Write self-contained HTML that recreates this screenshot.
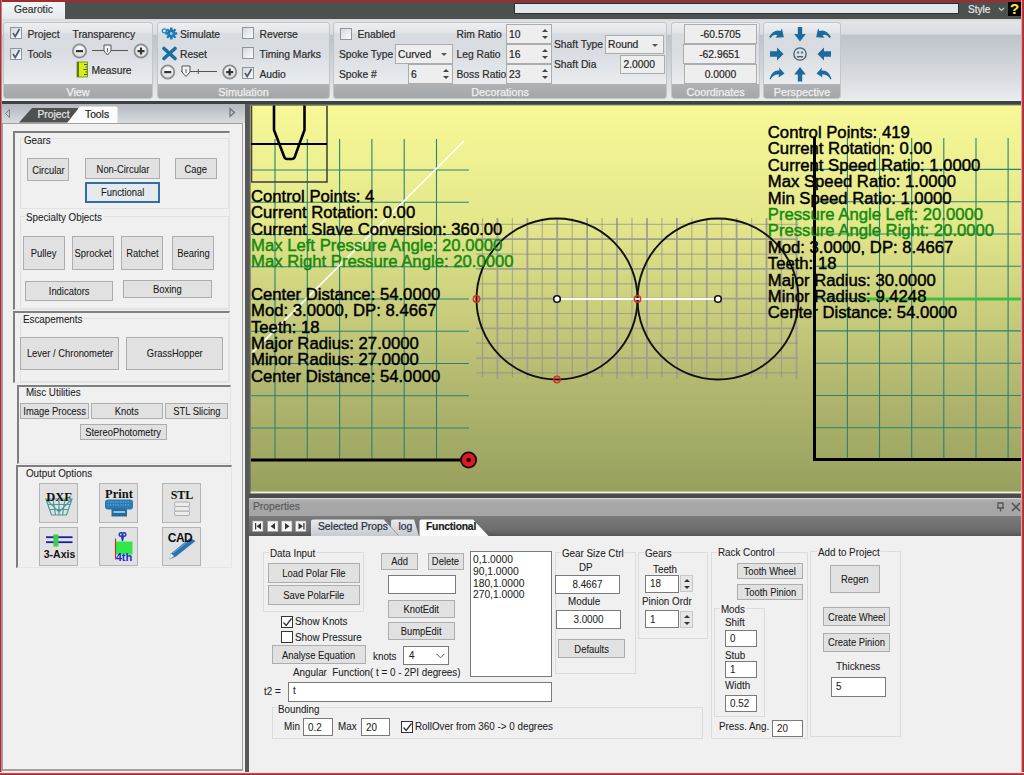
<!DOCTYPE html>
<html><head><meta charset="utf-8">
<style>
*{margin:0;padding:0;box-sizing:border-box;}
html,body{width:1024px;height:775px;overflow:hidden;}
body{position:relative;background:#f0f0f0;font-family:"Liberation Sans",sans-serif;color:#222;}
.a{position:absolute;}
.t{position:absolute;white-space:nowrap;line-height:1;}
/* frame */
#frameT{left:0;top:0;width:1024px;height:1.5px;background:#a02c30;}
#frameL{left:0;top:0;width:2px;height:775px;background:linear-gradient(90deg,#9c2e34 0,#a83a40 55%,#f0d4d4 100%);}
#frameR{left:1021px;top:0;width:3px;height:775px;background:linear-gradient(90deg,#f4dada 0,#c04048 45%,#9c2a30 100%);}
#frameB{left:0;top:772px;width:1024px;height:3px;background:linear-gradient(#f6e4e4 0,#f0d0d0 30%,#b03038 55%,#9a2830 100%);}
#titlebar{left:2px;top:2px;width:1020px;height:17px;background:#4e5050;}
#tabG{left:2px;top:1px;width:63px;height:21px;background:linear-gradient(#f4f6f8,#e4e7ea);border-radius:2px 2px 0 0;}
#ribbon{left:2px;top:19px;width:1020px;height:82px;background:linear-gradient(#d4d8dc 0,#e2e5e8 3px,#dadde1 15px,#bfc4ca 16.5px,#c6cbd1 30px,#d6dade 55px,#e6eaed 78px,#eef0f2 82px);}
.grp{position:absolute;top:22px;height:77px;border:1px solid #c3c6c9;border-radius:3px;background:linear-gradient(#eceef1 0,#e3e6e9 9px,#d8dce0 11px,#d9dde1 30px,#e4e7ea 50px,#eceef0 63px);overflow:hidden;}
.grpl{position:absolute;left:0;right:0;bottom:0;height:14px;background:linear-gradient(#b0b3b6,#a4a7aa);color:#f0f0f0;font-size:10.8px;text-align:center;line-height:16px;-webkit-text-stroke:0.25px #f0f0f0;}
#ribbonLine{left:2px;top:101px;width:1020px;height:3px;background:#3f4242;}
/* left panel */
#lpTabs{left:2px;top:104px;width:243px;height:19px;background:linear-gradient(#b2b7be,#d9dcdf);}
#lpBody{left:2px;top:123px;width:241px;height:648px;background:#f0f0f0;border:1px solid #a0a0a0;border-bottom:2px solid #a0a0a0;}
#splitter{left:245px;top:104px;width:4px;height:668px;background:#565858;}
#canvasFrame{left:250px;top:104px;width:772px;height:390px;background:#3a3c3c;}
#props{left:249px;top:494px;width:773px;height:278px;background:#f0f0f0;}
#propsLine{left:249px;top:494px;width:773px;height:4px;background:#4a4c4c;}
#propsTitle{left:249px;top:498px;width:773px;height:18px;background:linear-gradient(#b4b4b4,#a7a7a7 30%,#a5a5a5);}
#propsTabs{left:249px;top:516px;width:773px;height:20px;background:linear-gradient(#7a7a7a,#6c6c6c 70%,#555 100%);}
.cb{position:absolute;width:12px;height:12px;border:1px solid #8f969d;background:linear-gradient(135deg,#d3d8de,#fbfcfd);}
.cb svg{position:absolute;left:0;top:0;}
.rt{position:absolute;white-space:nowrap;font-size:10.3px;line-height:12px;color:#2c2c2c;}
.ri{position:absolute;background:#eeeeee;border:1px solid #aaacae;font-size:10.3px;color:#262626;}
.ri span{position:absolute;left:2px;top:3.8px;line-height:12px;white-space:nowrap;}
.ri.c span{left:0;right:0;text-align:center;}
.dd{position:absolute;right:5px;top:8px;width:0;height:0;border-left:3px solid transparent;border-right:3px solid transparent;border-top:3px solid #555;}
.sp{position:absolute;right:3px;top:3px;width:7px;height:12px;}
.sp:before{content:"";position:absolute;left:0.5px;top:1px;border-left:3px solid transparent;border-right:3px solid transparent;border-bottom:3px solid #444;}
.sp:after{content:"";position:absolute;left:0.5px;top:8px;border-left:3px solid transparent;border-right:3px solid transparent;border-top:3px solid #444;}
.gb{position:absolute;border-top:2px solid #7f7f7f;border-left:2px solid #7f7f7f;border-right:1px solid #e4e4e4;border-bottom:1px solid #e4e4e4;}
.gf{position:absolute;border:1px solid #e2e2e2;}
.gl{position:absolute;white-space:nowrap;font-size:9.7px;line-height:11px;color:#1e1e1e;background:#f0f0f0;padding:0 1px;}
.bt{position:absolute;background:#e1e1e1;border:1px solid #adadad;font-size:9.6px;color:#1a1a1a;display:flex;align-items:center;justify-content:center;white-space:nowrap;}
.bt.sel{border:2px solid #2f6fa3;background:#e5eaee;}
.ib{position:absolute;width:39px;height:39.5px;background:#e1e1e1;border:1px solid #b4b4b4;}
.ib svg{position:absolute;left:-1px;top:-1px;}
.pg{position:absolute;border:1px solid #dcdcdc;}
.pl{position:absolute;white-space:nowrap;font-size:9.7px;line-height:11px;color:#1e1e1e;background:#f0f0f0;padding:0 1px;}
.pt{position:absolute;white-space:nowrap;font-size:9.7px;line-height:11px;color:#1e1e1e;}
.pi{position:absolute;background:#fff;border:1px solid #7a7a7a;}
.pi span{position:absolute;left:3px;top:3px;font-size:9.7px;line-height:11px;color:#1e1e1e;white-space:nowrap;}
.pi.c span{left:0;right:0;text-align:center;}
.pc{position:absolute;width:12px;height:12px;background:#fff;border:1px solid #333;}
.pc svg{position:absolute;left:0;top:0;}
.psp{position:absolute;width:13px;height:17px;background:#e6e6e6;border:1px solid #c8c8c8;}
.psp:before{content:"";position:absolute;left:3.5px;top:3px;border-left:3px solid transparent;border-right:3px solid transparent;border-bottom:3.5px solid #333;}
.psp:after{content:"";position:absolute;left:3.5px;top:10px;border-left:3px solid transparent;border-right:3px solid transparent;border-top:3.5px solid #333;}
.rt,.ri span,.t{-webkit-text-stroke:0.2px currentColor;}
.bt,.pt,.pl,.gl,.pi span{-webkit-text-stroke:0.08px currentColor;}
.s{display:inline-block;transform:scaleX(0.88);}
.bt,.pt,.pl,.gl,.pi span{font-size:10.7px !important;}
.pt,.pl,.gl,.pi span{transform:scaleX(0.92);transform-origin:0 50%;}
.pi.c span{transform-origin:50% 50%;}
</style></head>
<body>
<div class="a" id="titlebar"></div>
<div class="a" id="tabG"></div>
<div class="t" style="left:14px;top:5px;font-size:10.3px;color:#333;">Gearotic</div>
<div class="a" style="left:514px;top:3px;width:445px;height:11px;background:#e3e6ec;border:1px solid #2e3030;"></div>
<div class="t" style="left:968px;top:5px;font-size:10px;color:#e8e8e8;">Style</div>
<svg class="a" style="left:998px;top:6.5px;" width="7" height="5"><path d="M1,1 L3.5,3.5 L6,1" fill="none" stroke="#cfcfcf" stroke-width="1.1"/></svg>
<div class="a" style="left:1008px;top:1px;width:14px;height:15px;background:#000;"></div>
<div class="t" style="left:1010px;top:1px;font-size:15px;font-weight:bold;color:#f4e838;">?</div>

<div class="a" id="ribbon"></div>

<!-- View group -->
<div class="grp" style="left:3px;width:150px;"><div class="grpl">View</div></div>
<!-- Simulation group -->
<div class="grp" style="left:157px;width:173px;"><div class="grpl">Simulation</div></div>
<!-- Decorations -->
<div class="grp" style="left:333px;width:334px;"><div class="grpl">Decorations</div></div>
<!-- Coordinates -->
<div class="grp" style="left:671px;width:89px;"><div class="grpl">Coordinates</div></div>
<!-- Perspective group -->
<div class="grp" style="left:763px;width:78px;"><div class="grpl">Perspective</div></div>
<!--RIBBON-->
<svg width="0" height="0" style="position:absolute"><defs>
<radialGradient id="circg" cx="0.5" cy="0.35" r="0.7"><stop offset="0" stop-color="#ffffff"/><stop offset="1" stop-color="#d0d3d6"/></radialGradient>
<linearGradient id="cbg" x1="0" y1="0" x2="1" y2="1"><stop offset="0" stop-color="#d6dbe1"/><stop offset="1" stop-color="#ffffff"/></linearGradient>
</defs></svg>
<!-- View -->
<div class="cb" style="left:10px;top:27px;"><svg width="10" height="10"><path d="M2,5 L4.2,8.5 L8.5,1" fill="none" stroke="#4d5d6c" stroke-width="1.7"/></svg></div>
<div class="rt" style="left:27.5px;top:28.5px;">Project</div>
<div class="cb" style="left:10px;top:47.5px;"><svg width="10" height="10"><path d="M2,5 L4.2,8.5 L8.5,1" fill="none" stroke="#4d5d6c" stroke-width="1.7"/></svg></div>
<div class="rt" style="left:27.5px;top:48.5px;">Tools</div>
<div class="rt" style="left:72.5px;top:28.5px;">Transparency</div>
<svg class="a" style="left:71px;top:43px;" width="80" height="17">
<circle cx="8.5" cy="8" r="6.6" fill="url(#circg)" stroke="#8c8f92" stroke-width="1.8"/>
<rect x="5" y="7" width="7" height="2.2" fill="#333"/>
<line x1="21" y1="7.5" x2="57" y2="7.5" stroke="#555" stroke-width="1"/>
<path d="M33,2 L40,2 L40,8 L36.5,12 L33,8 Z" fill="#f2f2f2" stroke="#555" stroke-width="1"/>
<line x1="36.5" y1="5" x2="36.5" y2="9" stroke="#666" stroke-width="1"/>
<circle cx="70" cy="8" r="6.6" fill="url(#circg)" stroke="#8c8f92" stroke-width="1.8"/>
<rect x="66.5" y="7" width="7" height="2.2" fill="#333"/><rect x="68.9" y="4.5" width="2.2" height="7" fill="#333"/>
</svg>
<svg class="a" style="left:76px;top:61px;" width="13" height="17">
<rect x="1" y="1" width="10.5" height="15" fill="#d4ef1a" stroke="#6a8a10" stroke-width="0.8"/>
<rect x="1" y="1" width="2" height="15" fill="#5e7a10"/>
<path d="M8,3.5 H11.5 M9.5,6 H11.5 M7.5,8.5 H11.5 M9.5,11 H11.5 M8,13.5 H11.5" stroke="#4a5a10" stroke-width="1"/>
</svg>
<div class="rt" style="left:91.5px;top:64.5px;">Measure</div>
<!-- Simulation -->
<svg class="a" style="left:160px;top:27px;" width="18" height="13">
<circle cx="4.3" cy="3.8" r="2" fill="none" stroke="#2a84c0" stroke-width="1.3"/>
<g transform="translate(11.3,6.5)" fill="#1f78b8">
<circle r="4.2"/>
<rect x="-1.2" y="-6" width="2.4" height="12"/><rect x="-6" y="-1.2" width="12" height="2.4"/>
<rect x="-1.2" y="-6" width="2.4" height="12" transform="rotate(45)"/><rect x="-6" y="-1.2" width="12" height="2.4" transform="rotate(45)"/>
<circle r="1.5" fill="#8fd0f0"/>
</g></svg>
<div class="rt" style="left:180px;top:28.5px;">Simulate</div>
<svg class="a" style="left:161px;top:46px;" width="17" height="15">
<path d="M3,2.5 L14,12.5 M14,2.5 L3,12.5" stroke="#1d6ca6" stroke-width="3.6" stroke-linecap="round"/>
</svg>
<div class="rt" style="left:180px;top:48.5px;">Reset</div>
<svg class="a" style="left:159px;top:64px;" width="80" height="17">
<circle cx="8.7" cy="8" r="6.6" fill="url(#circg)" stroke="#8c8f92" stroke-width="1.8"/>
<rect x="5.2" y="7" width="7" height="2.2" fill="#333"/>
<line x1="22" y1="7.5" x2="58" y2="7.5" stroke="#555" stroke-width="1"/>
<line x1="39.3" y1="5" x2="39.3" y2="10" stroke="#555" stroke-width="1"/>
<path d="M23,2 L31,2 L31,8 L27,12.5 L23,8 Z" fill="#f2f2f2" stroke="#555" stroke-width="1"/>
<line x1="27" y1="5" x2="27" y2="9" stroke="#666" stroke-width="1"/>
<circle cx="70.7" cy="8" r="6.6" fill="url(#circg)" stroke="#8c8f92" stroke-width="1.8"/>
<rect x="67.2" y="7" width="7" height="2.2" fill="#333"/><rect x="69.6" y="4.5" width="2.2" height="7" fill="#333"/>
</svg>
<div class="cb" style="left:242px;top:27px;"></div>
<div class="rt" style="left:259.5px;top:28.5px;">Reverse</div>
<div class="cb" style="left:242px;top:47px;"></div>
<div class="rt" style="left:259.5px;top:48.5px;">Timing Marks</div>
<div class="cb" style="left:242px;top:67px;"><svg width="10" height="10"><path d="M2,5 L4.2,8.5 L8.5,1" fill="none" stroke="#4d5d6c" stroke-width="1.7"/></svg></div>
<div class="rt" style="left:259.5px;top:68.5px;">Audio</div>
<!-- Decorations -->
<div class="cb" style="left:340px;top:27.5px;"></div>
<div class="rt" style="left:357.5px;top:28.5px;">Enabled</div>
<div class="rt" style="left:339px;top:49px;">Spoke Type</div>
<div class="ri" style="left:395px;top:44px;width:58px;height:20px;"><span>Curved</span><i class="dd"></i></div>
<div class="rt" style="left:339px;top:69px;">Spoke #</div>
<div class="ri" style="left:408px;top:64px;width:45px;height:20px;"><span>6</span><i class="sp"></i></div>
<div class="rt" style="left:456.5px;top:28.5px;">Rim Ratio</div>
<div class="rt" style="left:456.5px;top:49px;">Leg Ratio</div>
<div class="rt" style="left:456.5px;top:69px;">Boss Ratio</div>
<div class="ri" style="left:506px;top:24px;width:46px;height:20px;"><span>10</span><i class="sp"></i></div>
<div class="ri" style="left:506px;top:44px;width:46px;height:20px;"><span>16</span><i class="sp"></i></div>
<div class="ri" style="left:506px;top:64px;width:46px;height:20px;"><span>23</span><i class="sp"></i></div>
<div class="rt" style="left:554px;top:39px;">Shaft Type</div>
<div class="ri" style="left:605px;top:34.5px;width:59px;height:19px;"><span>Round</span><i class="dd"></i></div>
<div class="rt" style="left:554px;top:59px;">Shaft Dia</div>
<div class="ri" style="left:619.5px;top:54.5px;width:45px;height:19px;"><span style="left:3px">2.0000</span></div>
<!-- Coordinates -->
<div class="ri c" style="left:684px;top:24px;width:73px;height:19.5px;"><span>-60.5705</span></div>
<div class="ri c" style="left:683px;top:44px;width:73px;height:19.5px;"><span>-62.9651</span></div>
<div class="ri c" style="left:684px;top:64px;width:73px;height:19.5px;"><span>0.0000</span></div>
<!-- Perspective -->
<svg class="a" style="left:765px;top:24px;" width="74" height="60" fill="#1b6b9f" stroke="none">
<path d="M4,13 Q9,4.5 15.5,7 L17,4.5 L18.8,13.2 L10.5,13.8 L12.5,11.2 Q8.5,9.5 5.5,14 Z"/>
<path d="M32.8,3 H37.2 V10 H40.8 L35,17.5 L29.2,10 H32.8 Z"/>
<path d="M66,13 Q61,4.5 54.5,7 L53,4.5 L51.2,13.2 L59.5,13.8 L57.5,11.2 Q61.5,9.5 64.5,14 Z"/>
<path d="M5,27.3 H12 V23.5 L18.5,30 L12,36.5 V32.7 H5 Z"/>
<circle cx="35" cy="30" r="6.2" fill="none" stroke="#3c5f78" stroke-width="1.3"/>
<rect x="32.2" y="27.6" width="1.8" height="1.8" fill="#3c5f78"/><rect x="36.1" y="27.6" width="1.8" height="1.8" fill="#3c5f78"/><rect x="32" y="32" width="6" height="1.4" fill="#3c5f78"/>
<path d="M66,27.3 H59 V23.5 L52.5,30 L59,36.5 V32.7 H66 Z"/>
<path d="M4.5,55 Q7,45.5 14.5,46.5 L14,43.5 L19.5,49.5 L13.5,53.5 L14,50.5 Q8.5,50 5.5,55.5 Z"/>
<path d="M32.8,57.5 H37.2 V50.5 H40.8 L35,43 L29.2,50.5 H32.8 Z"/>
<path d="M66.5,55 Q64,45.5 56.5,46.5 L57,43.5 L51.5,49.5 L57.5,53.5 L57,50.5 Q62.5,50 65.5,55.5 Z"/>
</svg>
<!--/RIBBON-->


<div class="a" id="ribbonLine"></div>

<div class="a" id="lpTabs"></div>
<div class="a" id="lpBody"></div>
<!--LEFT-->
<svg class="a" style="left:2px;top:104px;" width="243" height="20">
<path d="M3.5,9.5 L7.5,5.5 L7.5,13.5 Z" fill="none" stroke="#7b7f84" stroke-width="1"/>
<path d="M232,4.5 L228,0.5 L228,0.5" fill="none"/>
<path d="M232.5,8.5 L228,4.5 L228,12.5 Z" fill="none" stroke="#6b6f74" stroke-width="1.2"/>
<path d="M17,18.5 L30,4 L76,4 L76,18.5 Z" fill="#4f5151"/>
<path d="M65,19 L78,2.5 L114,2.5 Q115.5,2.5 115.5,4 L115.5,19 Z" fill="#fbfbfb"/>
</svg>
<div class="t" style="left:37.5px;top:109.5px;font-size:10.3px;color:#e6e6e6;">Project</div>
<div class="t" style="left:85px;top:109.5px;font-size:10.3px;color:#222;">Tools</div>
<!-- group frames -->
<div class="gb" style="left:13px;top:131px;width:217px;height:179px;"></div>
<div class="gf" style="left:20px;top:138px;width:209px;height:71px;"></div>
<div class="gf" style="left:20px;top:216px;width:209px;height:93px;"></div>
<div class="gb" style="left:13px;top:311px;width:217px;height:72px;"></div>
<div class="gf" style="left:20px;top:318px;width:209px;height:64px;"></div>
<div class="gb" style="left:17px;top:385px;width:214px;height:79px;"></div>
<div class="gb" style="left:16px;top:465px;width:216px;height:103px;"></div>
<div class="gl" style="left:22.5px;top:134.5px;">Gears</div>
<div class="gl" style="left:24.5px;top:212px;">Specialty Objects</div>
<div class="gl" style="left:22px;top:313.5px;">Escapements</div>
<div class="gl" style="left:25px;top:387px;">Misc Utilities</div>
<div class="gl" style="left:25px;top:467.5px;">Output Options</div>
<!-- buttons -->
<div class="bt" style="left:27px;top:158px;width:42px;height:23px;"><span class="s">Circular</span></div>
<div class="bt" style="left:85px;top:158px;width:75px;height:21px;"><span class="s">Non-Circular</span></div>
<div class="bt" style="left:175px;top:158px;width:42px;height:21px;"><span class="s">Cage</span></div>
<div class="bt sel" style="left:85px;top:181.5px;width:75px;height:21px;"><span class="s">Functional</span></div>
<div class="bt" style="left:23px;top:236px;width:42px;height:34px;"><span class="s">Pulley</span></div>
<div class="bt" style="left:72px;top:236px;width:42px;height:34px;"><span class="s">Sprocket</span></div>
<div class="bt" style="left:121px;top:236px;width:42px;height:34px;"><span class="s">Ratchet</span></div>
<div class="bt" style="left:172px;top:236px;width:42px;height:34px;"><span class="s">Bearing</span></div>
<div class="bt" style="left:25px;top:281px;width:88px;height:20px;"><span class="s">Indicators</span></div>
<div class="bt" style="left:123px;top:279.5px;width:89px;height:18px;"><span class="s">Boxing</span></div>
<div class="bt" style="left:20px;top:336.5px;width:99px;height:33px;"><span class="s">Lever / Chronometer</span></div>
<div class="bt" style="left:126px;top:336.5px;width:97px;height:33px;"><span class="s">GrassHopper</span></div>
<div class="bt" style="left:20px;top:402.5px;width:68.5px;height:16px;"><span class="s">Image Process</span></div>
<div class="bt" style="left:91px;top:402.5px;width:72px;height:16px;"><span class="s">Knots</span></div>
<div class="bt" style="left:165px;top:402.5px;width:63px;height:16px;"><span class="s">STL Slicing</span></div>
<div class="bt" style="left:79.5px;top:423.5px;width:87px;height:16px;"><span class="s">StereoPhotometry</span></div>
<!-- output icons -->
<div class="ib" style="left:39px;top:483px;">
<svg width="40" height="40">
<path d="M7,16 L33,16 L27.5,32 L12.5,32 Z M9.5,21.5 L30.5,21.5 M11,26.5 L29,26.5 M20,16 L20,32 M14,16 L16.5,32 M26,16 L23.5,32 M7,16 L20,29 L33,16" fill="none" stroke="#4a9a98" stroke-width="1.2"/>
<text x="20" y="17.5" text-anchor="middle" font-family="Liberation Serif" font-weight="bold" font-size="12.5" fill="#111">DXF</text>
</svg></div>
<div class="ib" style="left:99px;top:483px;">
<svg width="40" height="40">
<text x="20" y="15" text-anchor="middle" font-family="Liberation Serif" font-weight="bold" font-size="12.5" fill="#111">Print</text>
<rect x="6" y="16.5" width="28" height="10" rx="3" fill="#2a7ab4"/>
<path d="M8.5,19 H31.5 M8.5,22 H31.5" stroke="#6ab0dc" stroke-width="1" stroke-dasharray="1.5,1"/>
<rect x="12.5" y="25.5" width="15.5" height="8" fill="#2a6a9c"/>
<rect x="14.5" y="28" width="11.5" height="2" fill="#8cc4e8"/>
</svg></div>
<div class="ib" style="left:162px;top:483px;">
<svg width="40" height="40">
<text x="20" y="15.5" text-anchor="middle" font-family="Liberation Serif" font-weight="bold" font-size="12" fill="#111">STL</text>
<g fill="#ececec" stroke="#a8a8a8" stroke-width="0.9">
<rect x="12.5" y="28" width="15" height="4.5" rx="1.5"/>
<rect x="12.5" y="23.5" width="15" height="4.5" rx="1.5"/>
<rect x="12.5" y="19" width="15" height="4.5" rx="1.5"/>
</g>
</svg></div>
<div class="ib" style="left:39px;top:526.5px;">
<svg width="40" height="40">
<rect x="7" y="9.3" width="26.5" height="1.8" fill="#1c1ca8"/><rect x="7" y="14.3" width="26.5" height="1.8" fill="#1c1ca8"/>
<rect x="14.4" y="7.5" width="5" height="12" fill="#3ad04a"/>
<text x="20.5" y="31" text-anchor="middle" font-family="Liberation Sans" font-weight="bold" font-size="10.5" fill="#111">3-Axis</text>
</svg></div>
<div class="ib" style="left:99px;top:526.5px;">
<svg width="40" height="40">
<circle cx="22" cy="7.5" r="1.8" fill="none" stroke="#1a3ac0" stroke-width="1.4"/><circle cx="25" cy="7.5" r="1.8" fill="none" stroke="#1a3ac0" stroke-width="1.4"/>
<path d="M22.5,9 L23.5,14 L24.5,9" fill="none" stroke="#1a3ac0" stroke-width="1.3"/>
<rect x="16" y="14.5" width="17.5" height="13" fill="#30e84a"/>
<line x1="16.5" y1="11.5" x2="16.5" y2="32.5" stroke="#c03020" stroke-width="1.1"/>
<text x="25" y="34" text-anchor="middle" font-family="Liberation Sans" font-weight="bold" font-size="11" fill="#1a2ac8">4th</text>
</svg></div>
<div class="ib" style="left:162px;top:526.5px;">
<svg width="40" height="40">
<path d="M7,32.5 L9,26.5 L28,11 L33.5,14 L14,29.5 Z" fill="#2a74b0"/>
<path d="M7,32.5 L9,26.5 L12,29 Z" fill="#e8f0f0"/>
<path d="M11,26 L27,13.5" stroke="#6aaad8" stroke-width="1"/>
<text x="18" y="15" text-anchor="middle" font-family="Liberation Sans" font-weight="bold" font-size="12" fill="#111" letter-spacing="-0.5">CAD</text>
</svg></div>
<!--/LEFT-->

<div class="a" id="splitter"></div>
<!--CANVAS--><svg class="a" style="left:0;top:0;" width="1024" height="775" viewBox="0 0 1024 775">
<defs><linearGradient id="cg" x1="0" y1="0" x2="0" y2="1">
<stop offset="0" stop-color="#f7f997"/><stop offset="0.3" stop-color="#e4e78a"/><stop offset="0.72" stop-color="#b3b870"/><stop offset="1" stop-color="#97a05d"/></linearGradient>
<clipPath id="cc"><rect x="250.5" y="105.5" width="771.5" height="386.5"/></clipPath></defs>
<rect x="249" y="104" width="773" height="390" fill="#3c3e3e"/><rect x="249" y="104" width="1.5" height="390" fill="#606262"/>
<rect x="250.5" y="104.5" width="771" height="1.5" fill="#8a8a78"/>
<rect x="250.5" y="105.5" width="771.5" height="386.5" fill="url(#cg)"/>
<rect x="250.5" y="491.5" width="771.5" height="2" fill="#eeeedc"/>
<g clip-path="url(#cc)">
<line x1="482.5" y1="218.0" x2="482.5" y2="377.0" stroke="rgba(128,128,140,0.5)" stroke-width="1.2" />
<line x1="497.4" y1="218.0" x2="497.4" y2="379.0" stroke="#a09f94" stroke-width="1.8" />
<line x1="512.4" y1="218.0" x2="512.4" y2="377.0" stroke="rgba(128,128,140,0.5)" stroke-width="1.2" />
<line x1="527.4" y1="218.0" x2="527.4" y2="379.0" stroke="#a09f94" stroke-width="1.8" />
<line x1="542.3" y1="218.0" x2="542.3" y2="377.0" stroke="rgba(128,128,140,0.5)" stroke-width="1.2" />
<line x1="557.2" y1="218.0" x2="557.2" y2="379.0" stroke="#a09f94" stroke-width="1.8" />
<line x1="572.2" y1="218.0" x2="572.2" y2="377.0" stroke="rgba(128,128,140,0.5)" stroke-width="1.2" />
<line x1="587.1" y1="218.0" x2="587.1" y2="379.0" stroke="#a09f94" stroke-width="1.8" />
<line x1="602.1" y1="218.0" x2="602.1" y2="377.0" stroke="rgba(128,128,140,0.5)" stroke-width="1.2" />
<line x1="617.0" y1="218.0" x2="617.0" y2="379.0" stroke="#a09f94" stroke-width="1.8" />
<line x1="632.0" y1="218.0" x2="632.0" y2="377.0" stroke="rgba(128,128,140,0.5)" stroke-width="1.2" />
<line x1="647.0" y1="218.0" x2="647.0" y2="379.0" stroke="#a09f94" stroke-width="1.8" />
<line x1="661.9" y1="218.0" x2="661.9" y2="377.0" stroke="rgba(128,128,140,0.5)" stroke-width="1.2" />
<line x1="676.9" y1="218.0" x2="676.9" y2="379.0" stroke="#a09f94" stroke-width="1.8" />
<line x1="691.8" y1="218.0" x2="691.8" y2="377.0" stroke="rgba(128,128,140,0.5)" stroke-width="1.2" />
<line x1="706.8" y1="218.0" x2="706.8" y2="379.0" stroke="#a09f94" stroke-width="1.8" />
<line x1="721.7" y1="218.0" x2="721.7" y2="377.0" stroke="rgba(128,128,140,0.5)" stroke-width="1.2" />
<line x1="736.6" y1="218.0" x2="736.6" y2="379.0" stroke="#a09f94" stroke-width="1.8" />
<line x1="751.6" y1="218.0" x2="751.6" y2="377.0" stroke="rgba(128,128,140,0.5)" stroke-width="1.2" />
<line x1="766.5" y1="218.0" x2="766.5" y2="379.0" stroke="#a09f94" stroke-width="1.8" />
<line x1="781.5" y1="218.0" x2="781.5" y2="377.0" stroke="rgba(128,128,140,0.5)" stroke-width="1.2" />
<line x1="796.5" y1="218.0" x2="796.5" y2="379.0" stroke="#a09f94" stroke-width="1.8" />
<line x1="476.0" y1="224.4" x2="798.0" y2="224.4" stroke="rgba(128,128,140,0.5)" stroke-width="1.2" />
<line x1="476.0" y1="239.2" x2="798.0" y2="239.2" stroke="#a09f94" stroke-width="1.8" />
<line x1="476.0" y1="254.1" x2="798.0" y2="254.1" stroke="rgba(128,128,140,0.5)" stroke-width="1.2" />
<line x1="476.0" y1="268.9" x2="798.0" y2="268.9" stroke="#a09f94" stroke-width="1.8" />
<line x1="476.0" y1="283.8" x2="798.0" y2="283.8" stroke="rgba(128,128,140,0.5)" stroke-width="1.2" />
<line x1="476.0" y1="298.6" x2="798.0" y2="298.6" stroke="#a09f94" stroke-width="1.8" />
<line x1="476.0" y1="313.5" x2="798.0" y2="313.5" stroke="rgba(128,128,140,0.5)" stroke-width="1.2" />
<line x1="476.0" y1="328.4" x2="798.0" y2="328.4" stroke="#a09f94" stroke-width="1.8" />
<line x1="476.0" y1="343.2" x2="798.0" y2="343.2" stroke="rgba(128,128,140,0.5)" stroke-width="1.2" />
<line x1="476.0" y1="358.1" x2="798.0" y2="358.1" stroke="#a09f94" stroke-width="1.8" />
<line x1="476.0" y1="372.9" x2="798.0" y2="372.9" stroke="rgba(128,128,140,0.5)" stroke-width="1.2" />
<line x1="275.0" y1="139.0" x2="275.0" y2="459.0" stroke="#2a8274" stroke-width="1.1" />
<line x1="307.3" y1="139.0" x2="307.3" y2="459.0" stroke="#2a8274" stroke-width="1.1" />
<line x1="339.6" y1="139.0" x2="339.6" y2="459.0" stroke="#2a8274" stroke-width="1.1" />
<line x1="371.9" y1="139.0" x2="371.9" y2="459.0" stroke="#2a8274" stroke-width="1.1" />
<line x1="404.2" y1="139.0" x2="404.2" y2="459.0" stroke="#2a8274" stroke-width="1.1" />
<line x1="436.5" y1="139.0" x2="436.5" y2="459.0" stroke="#2a8274" stroke-width="1.1" />
<line x1="251.0" y1="170.0" x2="469.0" y2="170.0" stroke="#2a8274" stroke-width="1.1" />
<line x1="251.0" y1="202.2" x2="469.0" y2="202.2" stroke="#2a8274" stroke-width="1.1" />
<line x1="251.0" y1="234.5" x2="469.0" y2="234.5" stroke="#2a8274" stroke-width="1.1" />
<line x1="251.0" y1="266.8" x2="469.0" y2="266.8" stroke="#2a8274" stroke-width="1.1" />
<line x1="251.0" y1="299.0" x2="469.0" y2="299.0" stroke="#2a8274" stroke-width="1.1" />
<line x1="251.0" y1="331.2" x2="469.0" y2="331.2" stroke="#2a8274" stroke-width="1.1" />
<line x1="251.0" y1="363.5" x2="469.0" y2="363.5" stroke="#2a8274" stroke-width="1.1" />
<line x1="251.0" y1="395.8" x2="469.0" y2="395.8" stroke="#2a8274" stroke-width="1.1" />
<line x1="251.0" y1="428.0" x2="469.0" y2="428.0" stroke="#2a8274" stroke-width="1.1" />
<line x1="847.4" y1="138.0" x2="847.4" y2="459.0" stroke="#2a8274" stroke-width="1.1" />
<line x1="879.5" y1="138.0" x2="879.5" y2="459.0" stroke="#2a8274" stroke-width="1.1" />
<line x1="911.7" y1="138.0" x2="911.7" y2="459.0" stroke="#2a8274" stroke-width="1.1" />
<line x1="943.8" y1="138.0" x2="943.8" y2="459.0" stroke="#2a8274" stroke-width="1.1" />
<line x1="976.0" y1="138.0" x2="976.0" y2="459.0" stroke="#2a8274" stroke-width="1.1" />
<line x1="1008.1" y1="138.0" x2="1008.1" y2="459.0" stroke="#2a8274" stroke-width="1.1" />
<line x1="815.0" y1="169.4" x2="1022.0" y2="169.4" stroke="#2a8274" stroke-width="1.1" />
<line x1="815.0" y1="201.7" x2="1022.0" y2="201.7" stroke="#2a8274" stroke-width="1.1" />
<line x1="815.0" y1="234.0" x2="1022.0" y2="234.0" stroke="#2a8274" stroke-width="1.1" />
<line x1="815.0" y1="266.3" x2="1022.0" y2="266.3" stroke="#2a8274" stroke-width="1.1" />
<line x1="815.0" y1="298.6" x2="1022.0" y2="298.6" stroke="#2a8274" stroke-width="1.1" />
<line x1="815.0" y1="330.9" x2="1022.0" y2="330.9" stroke="#2a8274" stroke-width="1.1" />
<line x1="815.0" y1="363.2" x2="1022.0" y2="363.2" stroke="#2a8274" stroke-width="1.1" />
<line x1="815.0" y1="395.5" x2="1022.0" y2="395.5" stroke="#2a8274" stroke-width="1.1" />
<line x1="815.0" y1="427.8" x2="1022.0" y2="427.8" stroke="#2a8274" stroke-width="1.1" />
<rect x="251.5" y="105" width="75.5" height="77" fill="none" stroke="#474740" stroke-width="1.6"/>
<line x1="251" y1="144" x2="327" y2="144" stroke="#000" stroke-width="2.2"/>
<path d="M274,104 L274,130 L284.5,157.5 Q285.5,159 287,159 L292,159 Q293.5,159 294.5,157.5 L304.5,130 L304.5,104" fill="none" stroke="#000" stroke-width="2.6" stroke-linejoin="round"/>
<line x1="464" y1="141" x2="252" y2="353" stroke="#fff" stroke-width="1.6"/>
<circle cx="557" cy="299" r="80.5" fill="none" stroke="#111" stroke-width="1.9"/>
<circle cx="718" cy="299" r="80.5" fill="none" stroke="#111" stroke-width="1.9"/>
<line x1="557" y1="299" x2="718" y2="299" stroke="#fff" stroke-width="2"/>
<circle cx="557" cy="299" r="3.3" fill="#fff" stroke="#111" stroke-width="1.6"/>
<circle cx="718" cy="299" r="3.3" fill="#fff" stroke="#111" stroke-width="1.6"/>
<circle cx="476.5" cy="299" r="3.2" fill="none" stroke="#e02a20" stroke-width="1.4"/>
<circle cx="637.5" cy="299" r="3.2" fill="none" stroke="#e02a20" stroke-width="1.4"/>
<circle cx="557" cy="379.5" r="3.2" fill="none" stroke="#e02a20" stroke-width="1.4"/>
<line x1="814.5" y1="137" x2="814.5" y2="461" stroke="#000" stroke-width="3"/>
<line x1="813" y1="459.5" x2="1022" y2="459.5" stroke="#000" stroke-width="3"/>
<line x1="860" y1="299" x2="1022" y2="299" stroke="#3fbf3f" stroke-width="3.2"/>
<line x1="251" y1="460" x2="462" y2="460" stroke="#000" stroke-width="3"/>
<circle cx="468.6" cy="460" r="7.6" fill="#e01a22" stroke="#111" stroke-width="1.8"/>
<circle cx="468.6" cy="460" r="2.3" fill="#1a0a0a"/>
<g font-family="Liberation Sans" font-size="16.7" stroke-width="0.45">
<text x="251" y="201.8" fill="#000" stroke="#000">Control Points: 4</text>
<text x="251" y="218.2" fill="#000" stroke="#000">Current Rotation: 0.00</text>
<text x="251" y="234.5" fill="#000" stroke="#000">Current Slave Conversion: 360.00</text>
<text x="251" y="250.9" fill="#138a13" stroke="#138a13">Max Left Pressure Angle: 20.0000</text>
<text x="251" y="267.2" fill="#138a13" stroke="#138a13">Max Right Pressure Angle: 20.0000</text>
<text x="251" y="299.9" fill="#000" stroke="#000">Center Distance: 54.0000</text>
<text x="251" y="316.2" fill="#000" stroke="#000">Mod: 3.0000, DP: 8.4667</text>
<text x="251" y="332.6" fill="#000" stroke="#000">Teeth: 18</text>
<text x="251" y="349.0" fill="#000" stroke="#000">Major Radius: 27.0000</text>
<text x="251" y="365.3" fill="#000" stroke="#000">Minor Radius: 27.0000</text>
<text x="251" y="381.7" fill="#000" stroke="#000">Center Distance: 54.0000</text>
<text x="767.8" y="138.0" fill="#000" stroke="#000">Control Points: 419</text>
<text x="767.8" y="154.4" fill="#000" stroke="#000">Current Rotation: 0.00</text>
<text x="767.8" y="170.8" fill="#000" stroke="#000">Current Speed Ratio: 1.0000</text>
<text x="767.8" y="187.2" fill="#000" stroke="#000">Max Speed Ratio: 1.0000</text>
<text x="767.8" y="203.6" fill="#000" stroke="#000">Min Speed Ratio: 1.0000</text>
<text x="767.8" y="220.0" fill="#138a13" stroke="#138a13">Pressure Angle Left: 20.0000</text>
<text x="767.8" y="236.4" fill="#138a13" stroke="#138a13">Pressure Angle Right: 20.0000</text>
<text x="767.8" y="252.8" fill="#000" stroke="#000">Mod: 3.0000, DP: 8.4667</text>
<text x="767.8" y="269.2" fill="#000" stroke="#000">Teeth: 18</text>
<text x="767.8" y="285.6" fill="#000" stroke="#000">Major Radius: 30.0000</text>
<text x="767.8" y="302.0" fill="#000" stroke="#000">Minor Radius: 9.4248</text>
<text x="767.8" y="318.4" fill="#000" stroke="#000">Center Distance: 54.0000</text>
</g>
</g>
</svg><!--/CANVAS-->

<div class="a" id="props"></div>
<div class="a" id="propsLine"></div>
<div class="a" id="propsTitle"></div>
<div class="a" id="propsTabs"></div>

<!--PROPS-->
<div class="t" style="left:253px;top:502px;font-size:10.3px;color:#5c5c5c;">Properties</div>
<svg class="a" style="left:994px;top:500px;" width="28" height="14">
<path d="M4,3 H9 V8 H4 Z M3,8 H10 M6.5,8 V11.5" fill="none" stroke="#555" stroke-width="1.3"/>
<path d="M18,3 L26,11 M26,3 L18,11" stroke="#4a4a4a" stroke-width="1.4"/>
</svg>
<div class="a" style="left:250px;top:498px;width:772px;height:1px;background:#d8d8d8;"></div>
<svg class="a" style="left:250px;top:516px;" width="772" height="20">
<defs><linearGradient id="tabg" x1="0" y1="0" x2="0" y2="1"><stop offset="0" stop-color="#e8eaee"/><stop offset="1" stop-color="#c6cad1"/></linearGradient></defs>
<g fill="#f6f6f6" stroke="#9a9a9a" stroke-width="0.6">
<rect x="2.5" y="5" width="10.5" height="10.5"/><rect x="17.5" y="5" width="10.5" height="10.5"/>
<rect x="31.5" y="5" width="10.5" height="10.5"/><rect x="45.5" y="5" width="10.5" height="10.5"/>
</g>
<g fill="#333">
<rect x="5" y="7" width="1.2" height="6.5"/><path d="M11,7 L6.5,10.2 L11,13.5 Z"/>
<path d="M25,7 L20.5,10.2 L25,13.5 Z"/>
<path d="M35,7 L39.5,10.2 L35,13.5 Z"/>
<path d="M48.5,7 L53,10.2 L48.5,13.5 Z"/><rect x="53.3" y="7" width="1.2" height="6.5"/>
</g>
<path d="M61,20 L61,5.5 Q61,3.5 63,3.5 L134,3.5 L148.5,20 Z" fill="url(#tabg)"/>
<path d="M141,20 L141,5.5 Q141,3.5 143,3.5 L164,3.5 L169,20 Z" fill="url(#tabg)"/>
<path d="M134,3.5 L148.5,19.5" stroke="#8a8d92" stroke-width="0.8" fill="none"/>
<path d="M169.5,20 L169.5,5.5 Q169.5,3.5 171.5,3.5 L223,3.5 L238.5,20 Z" fill="#fbfbfb"/>
</svg>
<div class="a" style="left:250px;top:535.5px;width:772px;height:1px;background:#f0f0f0;"></div>
<div class="t" style="left:318px;top:522px;font-size:10.3px;color:#2a2a3a;">Selected Props</div>
<div class="t" style="left:398.5px;top:522px;font-size:10.3px;color:#2a2a3a;">log</div>
<div class="t" style="left:426px;top:522px;font-size:10.3px;font-weight:bold;color:#1a1a1a;letter-spacing:-0.2px;">Functional</div>

<!-- Data input -->
<div class="pg" style="left:262.5px;top:552px;width:101px;height:60px;"></div>
<div class="pl" style="left:268.5px;top:548px;">Data Input</div>
<div class="bt" style="left:268px;top:563px;width:91.5px;height:20px;"><span class="s">Load Polar File</span></div>
<div class="bt" style="left:268px;top:585px;width:91.5px;height:20px;"><span class="s">Save PolarFile</span></div>
<div class="pc" style="left:281px;top:615.5px;"><svg width="11" height="11"><path d="M1.5,5.5 L4.2,8.5 L9.5,1.5" fill="none" stroke="#333" stroke-width="1.3"/></svg></div>
<div class="pt" style="left:295px;top:616px;">Show Knots</div>
<div class="pc" style="left:281px;top:631px;"></div>
<div class="pt" style="left:295px;top:631.5px;">Show Pressure</div>
<div class="bt" style="left:272px;top:645px;width:93.5px;height:19px;"><span class="s">Analyse Equation</span></div>
<div class="pt" style="left:292.5px;top:667px;">Angular&nbsp; Function( t = 0 - 2PI degrees)</div>
<div class="bt" style="left:381px;top:552.5px;width:36.5px;height:17px;"><span class="s">Add</span></div>
<div class="bt" style="left:427.5px;top:552.5px;width:36.5px;height:17px;"><span class="s">Delete</span></div>
<div class="pi" style="left:388px;top:574.5px;width:68px;height:19px;"></div>
<div class="bt" style="left:388px;top:599.5px;width:67px;height:18.5px;"><span class="s">KnotEdit</span></div>
<div class="bt" style="left:388px;top:621.5px;width:67px;height:18.5px;"><span class="s">BumpEdit</span></div>
<div class="pt" style="left:373px;top:651px;">knots</div>
<div class="pi" style="left:402.5px;top:645.5px;width:46px;height:19px;"><span style="left:5px;">4</span>
<svg class="a" style="left:32px;top:6px;" width="9" height="6"><path d="M0.5,0.8 L4.5,4.8 L8.5,0.8" fill="none" stroke="#555" stroke-width="1"/></svg></div>
<div class="pi" style="left:469.5px;top:551px;width:82.5px;height:125.5px;">
<div class="pt" style="left:2.5px;top:2px;line-height:11.8px;transform:scaleX(0.96);">0,1.0000<br>90,1.0000<br>180,1.0000<br>270,1.0000</div></div>
<div class="pt" style="left:264px;top:686px;">t2 =</div>
<div class="pi" style="left:287.5px;top:681.5px;width:264.5px;height:20px;"><span style="left:4px;top:2px;">t</span></div>
<div class="pg" style="left:272px;top:707px;width:431px;height:32px;"></div>
<div class="pl" style="left:277px;top:703.5px;">Bounding</div>
<div class="pt" style="left:283.5px;top:720.5px;">Min</div>
<div class="pi" style="left:302.5px;top:718px;width:30.5px;height:17.5px;"><span style="left:4px;top:2.5px;">0.2</span></div>
<div class="pt" style="left:338px;top:721px;">Max</div>
<div class="pi" style="left:360.5px;top:718px;width:29.5px;height:17.5px;"><span style="left:4px;top:2.5px;">20</span></div>
<div class="pc" style="left:401px;top:721px;"><svg width="11" height="11"><path d="M1.5,5.5 L4.2,8.5 L9.5,1.5" fill="none" stroke="#333" stroke-width="1.3"/></svg></div>
<div class="pt" style="left:415px;top:721px;">RollOver from 360 -&gt; 0 degrees</div>
<!-- gear size ctrl -->
<div class="pg" style="left:554.5px;top:551.5px;width:81px;height:122.5px;"></div>
<div class="pl" style="left:561px;top:547.5px;">Gear Size Ctrl</div>
<div class="pt" style="left:579px;top:562px;">DP</div>
<div class="pi c" style="left:554.5px;top:575px;width:65px;height:18.5px;"><span>8.4667</span></div>
<div class="pt" style="left:568px;top:595.5px;">Module</div>
<div class="pi c" style="left:555.5px;top:610px;width:65px;height:18.5px;"><span>3.0000</span></div>
<div class="bt" style="left:558px;top:639px;width:67px;height:19px;"><span class="s">Defaults</span></div>
<!-- gears -->
<div class="pg" style="left:638px;top:551.5px;width:69.5px;height:87px;"></div>
<div class="pl" style="left:644px;top:547.5px;">Gears</div>
<div class="pt" style="left:652.5px;top:563.5px;">Teeth</div>
<div class="pi" style="left:644.5px;top:574.5px;width:34px;height:18px;"><span style="left:4px;top:2.5px;">18</span></div>
<div class="psp" style="left:679.5px;top:575px;"></div>
<div class="pt" style="left:641.5px;top:595.5px;">Pinion Ordr</div>
<div class="pi" style="left:644.5px;top:610px;width:34px;height:18px;"><span style="left:4px;top:2.5px;">1</span></div>
<div class="psp" style="left:679.5px;top:610.5px;"></div>
<!-- rack control -->
<div class="pg" style="left:710.5px;top:551.5px;width:97.5px;height:187px;"></div>
<div class="pl" style="left:717px;top:547px;">Rack Control</div>
<div class="bt" style="left:737px;top:563px;width:66px;height:16px;"><span class="s">Tooth Wheel</span></div>
<div class="bt" style="left:737px;top:583.5px;width:66px;height:16px;"><span class="s">Tooth Pinion</span></div>
<div class="pg" style="left:714px;top:608px;width:50.5px;height:109px;"></div>
<div class="pl" style="left:720px;top:603.5px;">Mods</div>
<div class="pt" style="left:724.5px;top:617px;">Shift</div>
<div class="pi" style="left:724.5px;top:629.5px;width:32px;height:17.5px;"><span style="left:4px;top:2.5px;">0</span></div>
<div class="pt" style="left:724.5px;top:649.5px;">Stub</div>
<div class="pi" style="left:724.5px;top:660.5px;width:32px;height:17.5px;"><span style="left:4px;top:2.5px;">1</span></div>
<div class="pt" style="left:724.5px;top:680px;">Width</div>
<div class="pi" style="left:724.5px;top:694.5px;width:32px;height:17.5px;"><span style="left:4px;top:2.5px;">0.52</span></div>
<div class="pt" style="left:718.5px;top:721px;">Press. Ang.</div>
<div class="pi" style="left:772px;top:719.5px;width:31px;height:17.5px;"><span style="left:4px;top:2.5px;">20</span></div>
<!-- add to project -->
<div class="pg" style="left:810px;top:551px;width:91px;height:185.5px;"></div>
<div class="pl" style="left:816.5px;top:547px;">Add to Project</div>
<div class="bt" style="left:829.5px;top:564.5px;width:50.5px;height:28.5px;"><span class="s">Regen</span></div>
<div class="bt" style="left:823px;top:607px;width:66.5px;height:19px;"><span class="s">Create Wheel</span></div>
<div class="bt" style="left:823px;top:632.5px;width:66.5px;height:19px;"><span class="s">Create Pinion</span></div>
<div class="pt" style="left:835.5px;top:661px;">Thickness</div>
<div class="pi" style="left:831px;top:677px;width:54.5px;height:20px;"><span style="left:4px;top:3px;">5</span></div>
<!--/PROPS-->

<div class="a" id="frameT"></div>
<div class="a" id="frameL"></div>
<div class="a" id="frameR"></div>
<div class="a" id="frameB"></div>
</body></html>
